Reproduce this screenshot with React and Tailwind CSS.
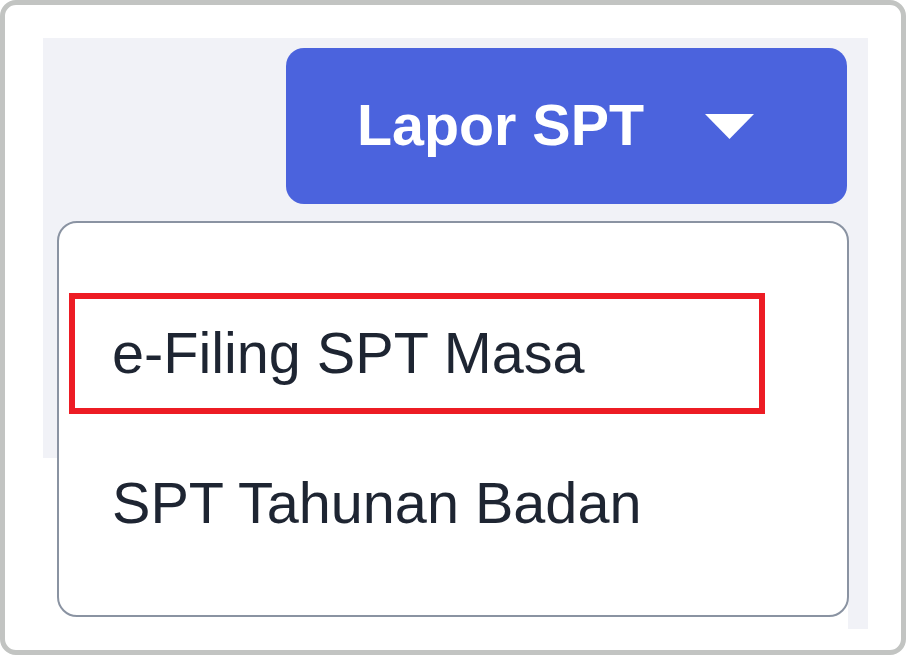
export default function App() {
  return (
    <div className="h-[658px] w-[908px] bg-white font-['Liberation_Sans',Arial,sans-serif]">
      {/* Outer frame */}
      <div className="relative h-[655px] w-[906px] rounded-[16px] border-[5px] border-[#c2c4c2] bg-white">
        {/* Page background panel */}
        <div className="ml-[38px] mt-[33px] w-[825px]">
          <div className="flex h-[420px] justify-end bg-[#f1f2f7] pr-[21px] pt-[10px]">
            {/* Lapor SPT button */}
            <button className="flex h-[156px] w-[561px] items-center rounded-[18px] bg-[#4b63dd] pl-[71px] text-white">
              <span className="text-[57.4px] font-bold leading-none">Lapor SPT</span>
              <svg className="ml-[61px]" width="49" height="25" viewBox="0 0 49 25">
                <polygon points="0,0 49,0 24.5,25" fill="#ffffff" />
              </svg>
            </button>
          </div>
          <div className="ml-auto h-[171px] w-[20px] bg-[#f1f2f7]" />
        </div>

        {/* Dropdown menu */}
        <div className="absolute left-[52px] top-[216px] h-[396px] w-[792px] rounded-[20px] border-2 border-[#8a93a2] bg-white pl-[10px] pt-[70px] text-[#1e2532]">
          <div className="flex h-[121px] w-[696px] items-center border-[6px] border-[#ed1c24] pl-[37px]">
            <span className="text-[57.6px] leading-none">e-Filing SPT Masa</span>
          </div>
          <div className="ml-[43px] mt-[61px] text-[57.6px] leading-none">SPT Tahunan Badan</div>
        </div>
      </div>
    </div>
  );
}
